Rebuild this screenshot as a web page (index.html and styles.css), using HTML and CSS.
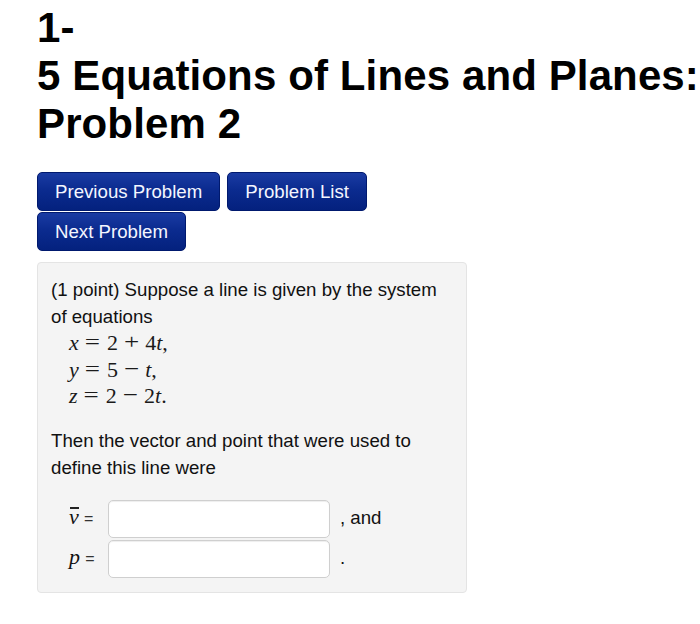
FILE: index.html
```html
<!DOCTYPE html>
<html lang="en">
<head>
<meta charset="utf-8">
<title>1-5 Equations of Lines and Planes: Problem 2</title>
<link rel="stylesheet" href="styles.css">
</head>
<body>
<div class="page">
  <h1 class="title">1-<br>5 Equations of Lines and Planes:<br>Problem 2</h1>

  <nav class="nav">
    <a class="btn" href="#">Previous Problem</a>
    <a class="btn" href="#">Problem List</a>
    <a class="btn" href="#">Next Problem</a>
  </nav>

  <div class="problem">
    <p class="text">(1 point) Suppose a line is given by the system of equations</p>
    <div class="eqs">
      <div class="eq"><i>x</i><span class="rel">=</span>2<span class="bin">+</span>4<i>t</i>,</div>
      <div class="eq"><i>y</i><span class="rel">=</span>5<span class="bin">&minus;</span><i>t</i>,</div>
      <div class="eq"><i>z</i><span class="rel">=</span>2<span class="bin">&minus;</span>2<i>t</i>.</div>
    </div>
    <p class="text gap">Then the vector and point that were used to define this line were</p>
    <div class="answers">
      <div class="lbl"><i class="vec">v</i> <span class="eqs-sign">=</span></div>
      <input class="field" type="text">
      <div class="suffix">, and</div>
      <div class="lbl"><i>p</i> <span class="eqs-sign">=</span></div>
      <input class="field" type="text">
      <div class="suffix">.</div>
    </div>
  </div>
</div>
</body>
</html>
```

FILE: styles.css
```css
html, body {
  margin: 0;
  padding: 0;
  background: #ffffff;
}

body {
  font-family: "Liberation Sans", Arial, sans-serif;
  color: #111111;
  font-size: 18.67px;
  line-height: 26.67px;
}

.page {
  padding: 0 0 0 37px;
}

.title {
  margin: 4px 0 0 0;
  font-size: 42px;
  line-height: 48px;
  font-weight: bold;
  color: #000000;
  letter-spacing: 0.12px;
}

.nav {
  display: flex;
  flex-wrap: wrap;
  gap: 1px 7px;
  width: 430px;
  margin-top: 24px;
}

.btn {
  display: block;
  box-sizing: border-box;
  height: 39px;
  padding: 6px 17px 4px 17px;
  border: 1px solid #00196e;
  border-radius: 5px;
  background: linear-gradient(to bottom, #1a3ba3 0%, #0b2b8f 45%, #04217e 100%);
  color: #f4f6ff;
  text-decoration: none;
  font-size: 18.67px;
  line-height: 26.67px;
}

.problem {
  box-sizing: border-box;
  width: 430px;
  margin-top: 11px;
  padding: 14px 13px 14px 13px;
  background: #f4f4f4;
  border: 1px solid #e4e4e4;
  border-radius: 4px;
}

.text {
  margin: 0;
}

.text.gap {
  margin-top: 19px;
}

.eqs {
  padding-left: 18px;
  font-family: "Liberation Serif", "Times New Roman", serif;
  font-size: 22px;
  line-height: 26.3px;
  color: #1a1a1a;
}

.eq i {
  font-style: italic;
}

.rel,
.bin {
  font-family: "Liberation Serif", "Times New Roman", serif;
  font-size: 27px;
  line-height: 20px;
  font-weight: normal;
  vertical-align: -1px;
  display: inline-block;
  transform: scaleY(0.8);
}

.rel {
  margin: 0 7px 0 6px;
}

.bin {
  margin: 0 6px;
}

.answers {
  display: grid;
  grid-template-columns: 30px 222px auto;
  column-gap: 9px;
  row-gap: 2px;
  align-items: center;
  margin: 18px 0 0 18px;
}

.lbl {
  white-space: nowrap;
  font-size: 18.67px;
}

.lbl i {
  font-family: "Liberation Serif", "Times New Roman", serif;
  font-size: 22px;
  font-style: italic;
}

.vec {
  position: relative;
}

.vec::before {
  content: "";
  position: absolute;
  left: 1px;
  right: 0;
  top: 3px;
  height: 1.5px;
  background: #222222;
}

.eqs-sign {
  font-size: 16px;
  color: #333333;
}

.field {
  box-sizing: border-box;
  width: 222px;
  height: 38px;
  margin: 0;
  padding: 4px 6px;
  border: 1px solid #cfcfcf;
  border-radius: 5px;
  background: #ffffff;
  box-shadow: inset 0 1px 1px rgba(0, 0, 0, 0.07);
  font-size: 16px;
}

.suffix {
  padding-left: 1px;
}
```
